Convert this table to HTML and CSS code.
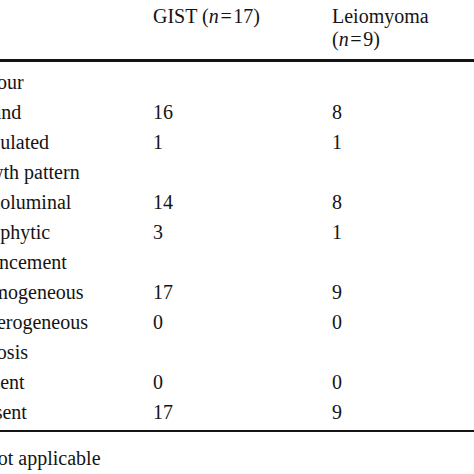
FILE: index.html
```html
<!DOCTYPE html>
<html lang="en">
<head>
<meta charset="utf-8">
<title>GIST vs Leiomyoma</title>
<link rel="stylesheet" href="styles.css">
</head>
<body>
<div class="frame">
  <table class="data">
    <colgroup>
      <col class="c-label">
      <col class="c-gist">
      <col class="c-leio">
    </colgroup>
    <thead>
      <tr>
        <th></th>
        <th>GIST (<i>n</i>&#8202;=&#8202;17)</th>
        <th>Leiomyoma<br>(<i>n</i>&#8202;=&#8202;9)</th>
      </tr>
    </thead>
    <tbody>
      <tr class="first"><td class="cat">Contour</td><td></td><td></td></tr>
      <tr><td class="sub">Round</td><td>16</td><td>8</td></tr>
      <tr><td class="sub">Lobulated</td><td>1</td><td>1</td></tr>
      <tr><td class="cat">Growth pattern</td><td></td><td></td></tr>
      <tr><td class="sub">Endoluminal</td><td>14</td><td>8</td></tr>
      <tr><td class="sub">Exophytic</td><td>3</td><td>1</td></tr>
      <tr><td class="cat">Enhancement</td><td></td><td></td></tr>
      <tr><td class="sub">Homogeneous</td><td>17</td><td>9</td></tr>
      <tr><td class="sub">Heterogeneous</td><td>0</td><td>0</td></tr>
      <tr><td class="cat">Necrosis</td><td></td><td></td></tr>
      <tr><td class="sub">Absent</td><td>0</td><td>0</td></tr>
      <tr class="last"><td class="sub">Present</td><td>17</td><td>9</td></tr>
    </tbody>
    <tfoot>
      <tr><td colspan="3" class="note">NA not applicable</td></tr>
    </tfoot>
  </table>
</div>
</body>
</html>
```

FILE: styles.css
```css
html, body {
  margin: 0;
  padding: 0;
  background: #ffffff;
}

.frame {
  width: 474px;
  height: 474px;
  overflow: hidden;
}

.data {
  margin-left: -42px;
  width: 516px;
  border-collapse: collapse;
  table-layout: fixed;
  font-family: "Liberation Serif", "Times New Roman", serif;
  font-size: 20px;
  color: #141414;
}

.c-label { width: 195px; }
.c-gist { width: 179px; }
.c-leio { width: 142px; }

.data th {
  text-align: left;
  font-weight: normal;
  vertical-align: top;
  line-height: 23px;
  padding: 5px 0 8px 0;
  border-bottom: 3px solid #141414;
  white-space: nowrap;
}

.data td {
  line-height: 30px;
  padding: 0;
  white-space: nowrap;
  text-align: left;
}

.data tr.first td { padding-top: 5px; }
.data tr.last td { padding-bottom: 3px; }

.data td.cat { padding-left: 0; }
.data td.sub { padding-left: 10px; }

.data tfoot td {
  border-top: 2px solid #141414;
  padding-top: 11px;
}

.data td.note { text-indent: -3px; }
```
